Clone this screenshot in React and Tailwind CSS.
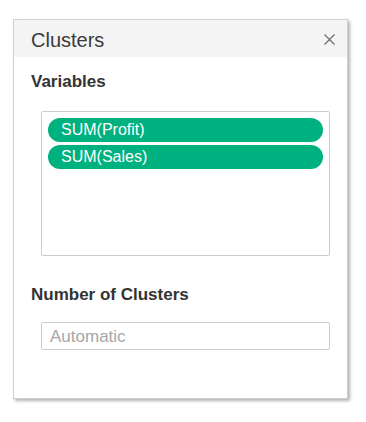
export default function App() {
  return (
    <div className="w-[366px] h-[422px] bg-white pt-[19px] pl-[13px]" style={{ fontFamily: '"Liberation Sans", Arial, sans-serif' }}>
      <div className="w-[335px] h-[380px] border border-[#cfcfcf] bg-white shadow-[2px_2px_3px_rgba(0,0,0,0.3)] flex flex-col">
        <div className="h-[37px] bg-[#f4f4f4] flex items-center justify-between pl-[17px] pr-[12px]">
          <span className="text-[20px] leading-[24px] text-[#3a3a3a] pt-[2px]">Clusters</span>
          <svg width="11" height="11" viewBox="0 0 11 11" className="mt-[1px]">
            <path d="M0.5 0.5 L10.5 10.5 M10.5 0.5 L0.5 10.5" stroke="#6b6b6b" strokeWidth="1.2" fill="none" />
          </svg>
        </div>
        <div className="pl-[17px] pt-[15px]">
          <div className="text-[17px] leading-[20px] font-bold text-[#333]">Variables</div>
        </div>
        <div className="pl-[27px] pt-[19px]">
          <div className="w-[289px] h-[145px] border border-[#cccccc] rounded-[2px] p-[6px] flex flex-col gap-[3px]">
            <div className="h-[24px] rounded-full bg-[#00b180] text-white text-[16px] leading-[24px] pl-[13px]">SUM(Profit)</div>
            <div className="h-[24px] rounded-full bg-[#00b180] text-white text-[16px] leading-[24px] pl-[13px]">SUM(Sales)</div>
          </div>
        </div>
        <div className="pl-[17px] pt-[29px]">
          <div className="text-[17px] leading-[20px] font-bold text-[#333]">Number of Clusters</div>
        </div>
        <div className="pl-[27px] pt-[17px]">
          <div className="w-[289px] h-[28px] border border-[#cccccc] rounded-[2px] pl-[8px] pt-[1px] text-[17px] leading-[25px] text-[#a6a6a6]">Automatic</div>
        </div>
      </div>
    </div>
  );
}
